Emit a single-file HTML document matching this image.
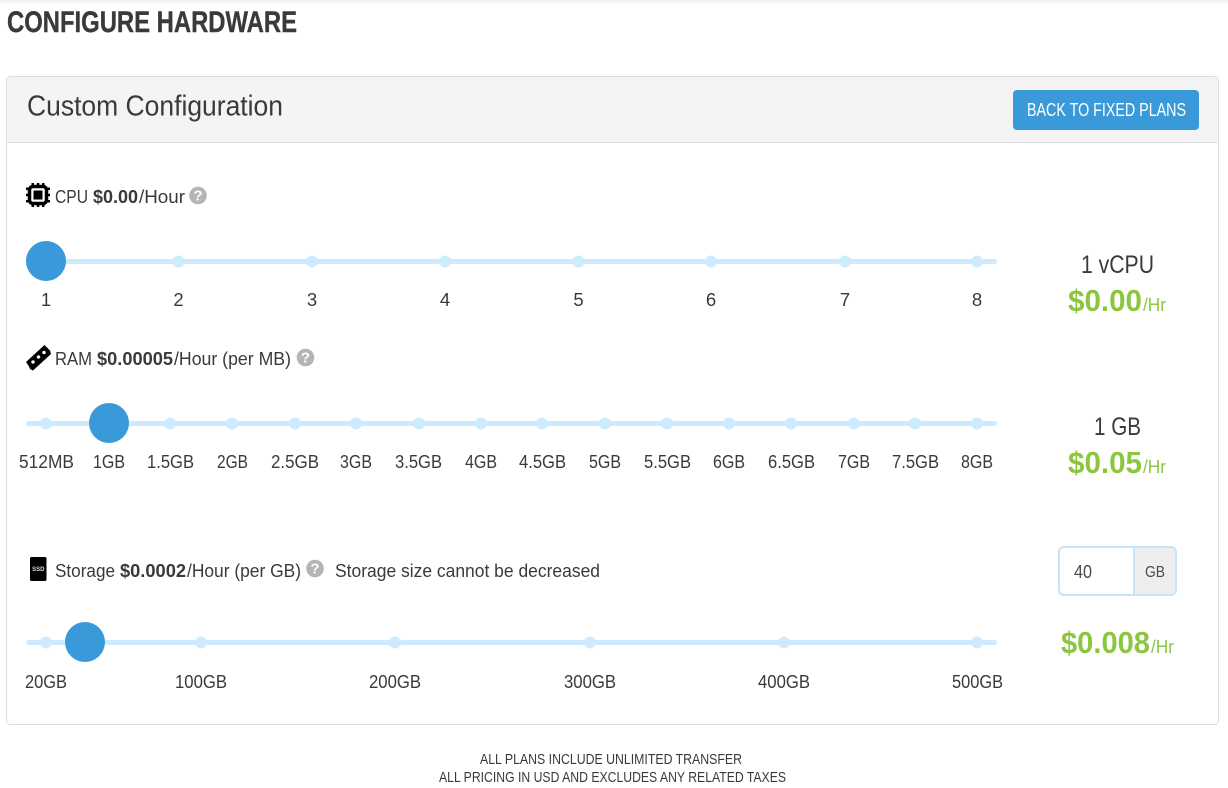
<!DOCTYPE html>
<html lang="en">
<head>
<meta charset="utf-8">
<title>Configure Hardware</title>
<style>
html,body{margin:0;padding:0;background:#fff;width:1228px;height:788px;overflow:hidden}
svg{display:block}
text{font-family:"Liberation Sans",Arial,sans-serif;fill:#3a3a3a;font-size:18.500px}
.b{font-weight:bold}
.g{fill:#8cc63f;font-weight:bold;font-size:31px}
.h{fill:#8cc63f;font-size:18px}
.f{font-size:14.500px}
.t{fill:#cdeaff}
.k{fill:#3a9ad9}
.q{fill:#b5b5b5}
.qt{fill:#fff;font-weight:bold;font-size:15px}
</style>
</head>
<body>
<svg xmlns="http://www.w3.org/2000/svg" width="1228" height="788" viewBox="0 0 1228 788">
<defs><linearGradient id="s" x1="0" y1="0" x2="0" y2="1"><stop offset="0" stop-color="#f0f0f0"/><stop offset="1" stop-color="#fff"/></linearGradient></defs>
<rect x="0" y="0" width="1228" height="5" fill="url(#s)"/>
<text class="b" x="7" y="32" style="font-size:30px;stroke:#3a3a3a;stroke-width:.4px" textLength="290" lengthAdjust="spacingAndGlyphs">CONFIGURE HARDWARE</text>

<rect x="6.500" y="76.500" width="1212" height="648" rx="4" fill="#fff" stroke="#ddd"/>
<path d="M7 142V80.500a3.500 3.500 0 0 1 3.500-3.500H1214.500a3.500 3.500 0 0 1 3.500 3.500V142Z" fill="#f4f4f4"/>
<rect x="7" y="142" width="1211" height="1" fill="#ddd"/>
<text x="27" y="115.500" style="font-size:29px" textLength="256" lengthAdjust="spacingAndGlyphs">Custom Configuration</text>
<rect x="1013" y="90" width="186" height="40" rx="4" class="k"/>
<text x="1027" y="116" style="fill:#fff;font-size:18px" textLength="159" lengthAdjust="spacingAndGlyphs">BACK TO FIXED PLANS</text>

<!-- CPU -->
<g fill="#000">
<rect x="29.500" y="186.500" width="17" height="17" rx="3.500" fill="none" stroke="#000" stroke-width="3.500"/>
<rect x="33.500" y="190.500" width="9" height="9"/>
<path d="M31.500 183h2.500v3h-2.500zM36.800 183h2.500v3h-2.500zM42 183h2.500v3h-2.500zM31.500 204h2.500v3h-2.500zM36.800 204h2.500v3h-2.500zM42 204h2.500v3h-2.500zM26 187.500h3v2.500h-3zM26 193.800h3v2.500h-3zM26 200h3v2.500h-3zM47 187.500h3v2.500h-3zM47 193.800h3v2.500h-3zM47 200h3v2.500h-3z"/>
</g>
<text x="55" y="203" textLength="33" lengthAdjust="spacingAndGlyphs">CPU</text>
<text class="b" x="93" y="203" textLength="45" lengthAdjust="spacingAndGlyphs">$0.00</text>
<text x="139" y="203" textLength="46" lengthAdjust="spacingAndGlyphs">/Hour</text>
<circle cx="198" cy="195.500" r="8.800" class="q"/><text class="qt" x="198" y="200.500" text-anchor="middle">?</text>

<rect x="26" y="259" width="971" height="5" rx="2.500" class="t"/>
<g class="t"><circle cx="178.500" cy="261.500" r="6"/><circle cx="312" cy="261.500" r="6"/><circle cx="445" cy="261.500" r="6"/><circle cx="578.500" cy="261.500" r="6"/><circle cx="711" cy="261.500" r="6"/><circle cx="845" cy="261.500" r="6"/><circle cx="977" cy="261.500" r="6"/></g>
<circle cx="46" cy="261" r="20" class="k"/>
<g text-anchor="middle"><text x="46" y="306">1</text><text x="178.500" y="306">2</text><text x="312" y="306">3</text><text x="445" y="306">4</text><text x="578.500" y="306">5</text><text x="711" y="306">6</text><text x="845" y="306">7</text><text x="977" y="306">8</text></g>

<text x="1081" y="273" style="font-size:25px" textLength="73" lengthAdjust="spacingAndGlyphs">1 vCPU</text>
<text class="g" x="1068" y="311" textLength="74" lengthAdjust="spacingAndGlyphs">$0.00</text>
<text class="h" x="1143" y="311" textLength="23" lengthAdjust="spacingAndGlyphs">/Hr</text>

<!-- RAM -->
<path fill-rule="evenodd" fill="#000" d="M26 362L44.500 345L50 350.500L51 354L33 370.500L30 369L29 366.500ZM33 360.200a1.800 1.800 0 1 0 .01 0ZM38.500 355.200a1.800 1.800 0 1 0 .01 0ZM44 350.700a1.800 1.800 0 1 0 .01 0Z"/>
<text x="55" y="365" textLength="37" lengthAdjust="spacingAndGlyphs">RAM</text>
<text class="b" x="97" y="365" textLength="76" lengthAdjust="spacingAndGlyphs">$0.00005</text>
<text x="174" y="365" textLength="117" lengthAdjust="spacingAndGlyphs">/Hour (per MB)</text>
<circle cx="305.500" cy="357.500" r="8.800" class="q"/><text class="qt" x="305.500" y="362.500" text-anchor="middle">?</text>

<rect x="26" y="421" width="971" height="5" rx="2.500" class="t"/>
<g class="t"><circle cx="46" cy="423.500" r="6"/><circle cx="170" cy="423.500" r="6"/><circle cx="232" cy="423.500" r="6"/><circle cx="295" cy="423.500" r="6"/><circle cx="356" cy="423.500" r="6"/><circle cx="419" cy="423.500" r="6"/><circle cx="481" cy="423.500" r="6"/><circle cx="542" cy="423.500" r="6"/><circle cx="605" cy="423.500" r="6"/><circle cx="667" cy="423.500" r="6"/><circle cx="729" cy="423.500" r="6"/><circle cx="791" cy="423.500" r="6"/><circle cx="854" cy="423.500" r="6"/><circle cx="915" cy="423.500" r="6"/><circle cx="977" cy="423.500" r="6"/></g>
<circle cx="109" cy="423" r="20" class="k"/>
<g>
<text x="19" y="468" textLength="55" lengthAdjust="spacingAndGlyphs">512MB</text>
<text x="93" y="468" textLength="32" lengthAdjust="spacingAndGlyphs">1GB</text>
<text x="147" y="468" textLength="47" lengthAdjust="spacingAndGlyphs">1.5GB</text>
<text x="217" y="468" textLength="31" lengthAdjust="spacingAndGlyphs">2GB</text>
<text x="271" y="468" textLength="48" lengthAdjust="spacingAndGlyphs">2.5GB</text>
<text x="340" y="468" textLength="32" lengthAdjust="spacingAndGlyphs">3GB</text>
<text x="395" y="468" textLength="47" lengthAdjust="spacingAndGlyphs">3.5GB</text>
<text x="465" y="468" textLength="32" lengthAdjust="spacingAndGlyphs">4GB</text>
<text x="519" y="468" textLength="47" lengthAdjust="spacingAndGlyphs">4.5GB</text>
<text x="589" y="468" textLength="32" lengthAdjust="spacingAndGlyphs">5GB</text>
<text x="644" y="468" textLength="47" lengthAdjust="spacingAndGlyphs">5.5GB</text>
<text x="713" y="468" textLength="32" lengthAdjust="spacingAndGlyphs">6GB</text>
<text x="768" y="468" textLength="47" lengthAdjust="spacingAndGlyphs">6.5GB</text>
<text x="838" y="468" textLength="32" lengthAdjust="spacingAndGlyphs">7GB</text>
<text x="892" y="468" textLength="47" lengthAdjust="spacingAndGlyphs">7.5GB</text>
<text x="961" y="468" textLength="32" lengthAdjust="spacingAndGlyphs">8GB</text>
</g>

<text x="1094" y="435" style="font-size:25px" textLength="47" lengthAdjust="spacingAndGlyphs">1 GB</text>
<text class="g" x="1068" y="473" textLength="74" lengthAdjust="spacingAndGlyphs">$0.05</text>
<text class="h" x="1143" y="473" textLength="23" lengthAdjust="spacingAndGlyphs">/Hr</text>

<!-- Storage -->
<rect x="30" y="557" width="16.500" height="24" rx="1.500" fill="#000"/>
<text x="38.250" y="571" text-anchor="middle" style="fill:#ddd;font-size:6px;font-weight:bold">SSD</text>
<text x="55" y="577" textLength="60" lengthAdjust="spacingAndGlyphs">Storage</text>
<text class="b" x="120" y="577" textLength="66" lengthAdjust="spacingAndGlyphs">$0.0002</text>
<text x="187" y="577" textLength="114" lengthAdjust="spacingAndGlyphs">/Hour (per GB)</text>
<circle cx="315" cy="568.500" r="8.800" class="q"/><text class="qt" x="315" y="573.500" text-anchor="middle">?</text>
<text x="335" y="577" textLength="265" lengthAdjust="spacingAndGlyphs">Storage size cannot be decreased</text>

<rect x="1059" y="547" width="117" height="48" rx="5" fill="#fff" stroke="#c5e4f9" stroke-width="2"/>
<path d="M1135 548H1171a4 4 0 0 1 4 4V590a4 4 0 0 1-4 4H1135Z" fill="#eee"/>
<rect x="1133" y="548" width="2" height="46" fill="#c5e4f9"/>
<text x="1074" y="578" style="font-size:18px;fill:#4a4a4a" textLength="18" lengthAdjust="spacingAndGlyphs">40</text>
<text x="1145" y="577" style="font-size:16px;fill:#4a4a4a" textLength="20" lengthAdjust="spacingAndGlyphs">GB</text>

<rect x="26" y="640" width="971" height="5" rx="2.500" class="t"/>
<g class="t"><circle cx="46" cy="642.500" r="6"/><circle cx="201" cy="642.500" r="6"/><circle cx="395" cy="642.500" r="6"/><circle cx="590" cy="642.500" r="6"/><circle cx="784" cy="642.500" r="6"/><circle cx="977" cy="642.500" r="6"/></g>
<circle cx="85" cy="642" r="20" class="k"/>
<g>
<text x="25" y="688" textLength="42" lengthAdjust="spacingAndGlyphs">20GB</text>
<text x="175" y="688" textLength="52" lengthAdjust="spacingAndGlyphs">100GB</text>
<text x="369" y="688" textLength="52" lengthAdjust="spacingAndGlyphs">200GB</text>
<text x="564" y="688" textLength="52" lengthAdjust="spacingAndGlyphs">300GB</text>
<text x="758" y="688" textLength="52" lengthAdjust="spacingAndGlyphs">400GB</text>
<text x="952" y="688" textLength="51" lengthAdjust="spacingAndGlyphs">500GB</text>
</g>
<text class="g" x="1061" y="653" textLength="89" lengthAdjust="spacingAndGlyphs">$0.008</text>
<text class="h" x="1151" y="653" textLength="23" lengthAdjust="spacingAndGlyphs">/Hr</text>

<text class="f" x="480" y="764" textLength="262" lengthAdjust="spacingAndGlyphs">ALL PLANS INCLUDE UNLIMITED TRANSFER</text>
<text class="f" x="439" y="782" textLength="347" lengthAdjust="spacingAndGlyphs">ALL PRICING IN USD AND EXCLUDES ANY RELATED TAXES</text>
</svg>
</body>
</html>
